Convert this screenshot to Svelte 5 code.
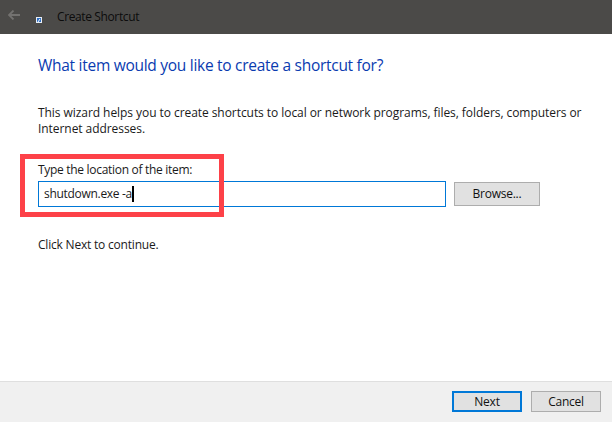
<script>
  const lines = ['This wizard helps you to create shortcuts to local or network programs, files, folders, computers or', 'Internet addresses.'];
</script>

<div class="win">
  <header class="bar">
    <svg class="back" width="12" height="10" viewBox="0 0 12 10"><path d="M5.5.5 1 5l4.5 4.5M1 5h11" fill="none" stroke="#737270" stroke-width="1.8"/></svg>
    <svg class="ico" width="6" height="6" viewBox="0 0 6 6"><rect width="6" height="6" fill="#e8eef5"/><rect x="1" y="1" width="4" height="4" fill="#2f6fc4"/><path d="M2 5 4 2" stroke="#fff" stroke-width="1"/></svg>
    <span class="title">Create Shortcut</span>
  </header>
  <main class="body">
    <h1>What item would you like to create a shortcut for?</h1>
    <p class="intro">{#each lines as l}<span>{l}</span>{/each}</p>
    <label class="lbl" for="loc">Type the location of the item:</label>
    <div class="row">
      <div class="input" id="loc"><span>shutdown.exe -a</span><i class="caret"></i></div>
      <button class="btn browse">Browse...</button>
    </div>
    <p class="hint">Click Next to continue.</p>
    <div class="mark"></div>
  </main>
  <footer class="foot">
    <button class="btn next">Next</button>
    <button class="btn cancel">Cancel</button>
  </footer>
</div>

<style>
  :global(body) { margin: 0; background: #fff; }
  .win { width: 612px; height: 422px; display: flex; flex-direction: column; font: 12px/16px "Open Sans", "Noto Sans", sans-serif; color: #1a1a1a; overflow: hidden; letter-spacing: -0.12px; }
  .bar { height: 34px; background: #4b4a48; display: flex; align-items: center; flex: none; }
  .back { margin: -5px 0 0 8px; }
  .ico { margin: 5px 0 0 16px; }
  .title { margin-left: 15px; color: #0c0c0c; letter-spacing: -0.38px; }
  .body { flex: 1; position: relative; padding: 0 38px; }
  h1 { margin: 21px 0 0; font-size: 15.5px; line-height: 20px; font-weight: 400; color: #0a3bb0; letter-spacing: -0.28px; }
  .intro { margin: 30px 0 0; letter-spacing: -0.06px; }
  .intro span { display: block; white-space: nowrap; }
  .lbl { display: block; margin-top: 25px; letter-spacing: -0.3px; }
  .row { display: flex; align-items: flex-start; gap: 8px; margin-top: 3px; }
  .input { height: 24px; border: 1px solid #0078d7; display: flex; align-items: center; padding-left: 5px; box-sizing: content-box; width: 401px; letter-spacing: -0.3px; }
  .caret { width: 2px; height: 16px; background: #000; }
  .btn { font: inherit; letter-spacing: -0.25px; color: #111; background: #e1e1e1; border: 1px solid #adadad; padding: 0; box-sizing: border-box; }
  .browse { width: 86px; height: 24px; margin-top: 1px; }
  .hint { margin: 30px 0 0; letter-spacing: -0.2px; }
  .mark { position: absolute; left: 20px; top: 120px; width: 204px; height: 63px; border: 5px solid #fd4148; box-sizing: border-box; pointer-events: none; }
  .foot { background: #f0f0f0; border-top: 1px solid #dfdfdf; display: flex; justify-content: flex-end; align-items: flex-start; gap: 9px; padding: 9px 11px 0 0; flex: none; box-sizing: border-box; height: 41px; }
  .next, .cancel { width: 70px; height: 21px; }
  .next { border: 2px solid #0078d7; }
</style>
